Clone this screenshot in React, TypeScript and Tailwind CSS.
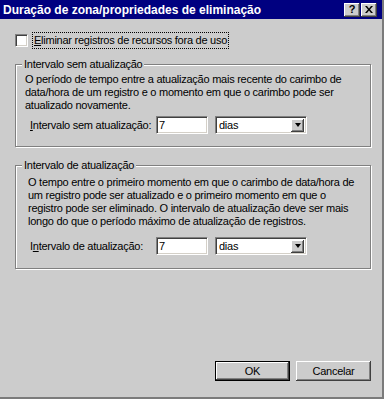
import React from 'react';

const GroupBox = ({ title, className, children }: { title: string; className: string; children: React.ReactNode }) => {
    return (
        <div className={`relative ml-[15px] w-[356px] border border-[#808080] shadow-[inset_1px_1px_0_#ffffff,1px_1px_0_#ffffff] ${className}`}>
            <span className="absolute left-[6px] top-[-8px] bg-[#cccccc] px-[2px] leading-[14px]">{title}</span>
            {children}
        </div>
    );
};

const Sunken = ({ className, children }: { className: string; children?: React.ReactNode }) => (
    <div className={`border border-t-[#808080] border-l-[#808080] border-b-white border-r-white shadow-[inset_1px_1px_0_#404040,inset_-1px_-1px_0_#d4d0c8] bg-white ${className}`}>
        {children}
    </div>
);

const Combo = () => (
    <Sunken className="ml-[7px] flex h-[18px] w-[92px] items-center justify-between pl-[3px] pr-[2px]">
        <span className="leading-none">dias</span>
        <div className="flex h-[13px] w-[13px] items-center justify-center bg-[#cccccc] shadow-[inset_-1px_-1px_0_#404040,inset_1px_1px_0_#ffffff,inset_-2px_-2px_0_#808080]">
            <div className="h-0 w-0 border-x-[3.5px] border-t-[4px] border-x-transparent border-t-black" />
        </div>
    </Sunken>
);

const Row = ({ label }: { label: [string, string, string] }) => (
    <div className="flex h-[18px] items-center pl-[14px]">
        <span className="w-[126px] leading-none">
            {label[0]}
            <span className="underline">{label[1]}</span>
            {label[2]}
        </span>
        <Sunken className="flex h-[18px] w-[52px] items-center pl-[2px]">
            <span className="leading-none">7</span>
        </Sunken>
        <Combo />
    </div>
);

const Button = ({ label, isDefault, className }: { label: string; isDefault?: boolean; className: string }) => (
    <div className={`${className} h-[20px] w-[75px] ${isDefault ? 'border border-black' : ''}`}>
        <div className="flex h-full w-full items-center justify-center bg-[#cccccc] shadow-[inset_-1px_-1px_0_#404040,inset_1px_1px_0_#ffffff,inset_-2px_-2px_0_#808080]">
            {label}
        </div>
    </div>
);

const App = () => {
    return (
        <div className="flex h-[399px] w-[384px] flex-col border-b-2 border-r-2 border-[#7b7b7b] bg-[#cccccc] font-['Liberation_Sans',Arial,sans-serif] text-[11px] tracking-[-0.25px] text-black">
            {/* Title bar */}
            <div className="flex h-[19px] shrink-0 items-center justify-between bg-[#000080] pl-[3px] pr-[5px]">
                <span className="text-[12px] font-bold tracking-normal text-white">Duração de zona/propriedades de eliminação</span>
                <div className="flex">
                    <div className="flex h-[14px] w-[16px] items-center justify-center bg-[#cccccc] text-[11px] font-bold leading-none shadow-[inset_-1px_-1px_0_#404040,inset_1px_1px_0_#ffffff,inset_-2px_-2px_0_#808080]">?</div>
                    <div className="ml-[1px] flex h-[14px] w-[16px] items-center justify-center bg-[#cccccc] shadow-[inset_-1px_-1px_0_#404040,inset_1px_1px_0_#ffffff,inset_-2px_-2px_0_#808080]">
                        <svg width="8" height="7" viewBox="0 0 8 7">
                            <path d="M0 0h2l2 2.5L6 0h2L5 3.5 8 7H6L4 4.5 2 7H0l3-3.5z" fill="black" />
                        </svg>
                    </div>
                </div>
            </div>

            {/* Checkbox */}
            <div className="mt-[13px] flex h-[17px] items-center pl-[15px]">
                <Sunken className="h-[13px] w-[13px]" />
                <span className="ml-[4px] flex h-[17px] items-center border border-dotted border-black px-[1px] leading-none">
                    <span className="underline">E</span>liminar registros de recursos fora de uso
                </span>
            </div>

            {/* Group 1 */}
            <GroupBox title="Intervalo sem atualização" className="mt-[15px] h-[83px]">
                <p className="whitespace-nowrap pl-[9px] pt-[8px] leading-[13px]">
                    O período de tempo entre a atualização mais recente do carimbo de
                    <br />
                    data/hora de um registro e o momento em que o carimbo pode ser
                    <br />
                    atualizado novamente.
                </p>
                <div className="mt-[4px]">
                    <Row label={['', 'I', 'ntervalo sem atualização:']} />
                </div>
            </GroupBox>

            {/* Group 2 */}
            <GroupBox title="Intervalo de atualização" className="mt-[18px] h-[104px]">
                <p className="whitespace-nowrap pl-[12px] pt-[10px] leading-[13px]">
                    O tempo entre o primeiro momento em que o carimbo de data/hora de
                    <br />
                    um registro pode ser atualizado e o primeiro momento em que o
                    <br />
                    registro pode ser eliminado. O intervalo de atualização deve ser mais
                    <br />
                    longo do que o período máximo de atualização de registros.
                </p>
                <div className="mt-[9px]">
                    <Row label={['I', 'n', 'tervalo de atualização:']} />
                </div>
            </GroupBox>

            {/* Buttons */}
            <div className="mt-[92px] flex">
                <Button label="OK" isDefault className="ml-[215px]" />
                <Button label="Cancelar" className="ml-[6px]" />
            </div>
        </div>
    );
};

export default App;
